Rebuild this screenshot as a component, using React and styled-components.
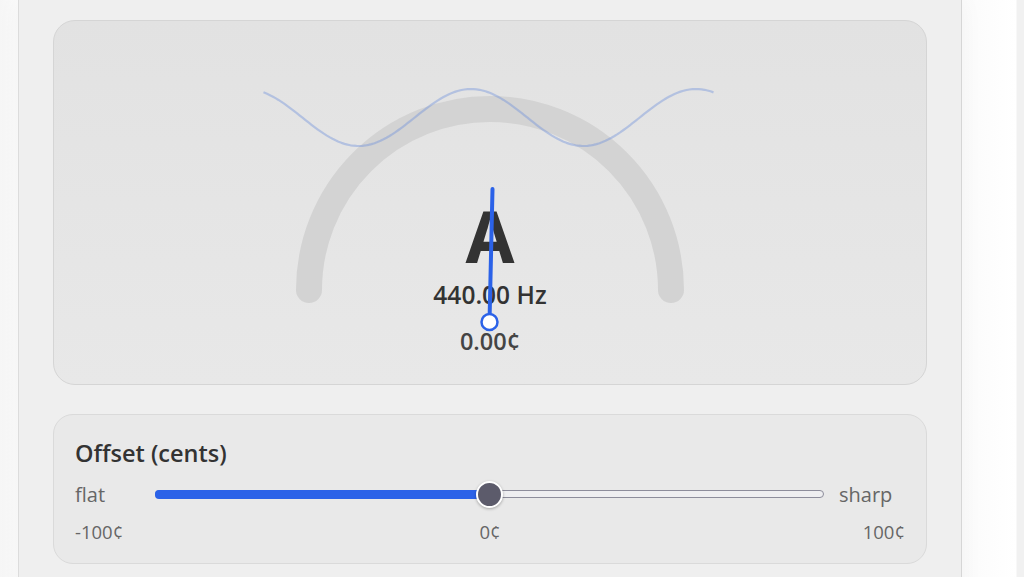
import React from "react";
import styled, { createGlobalStyle } from "styled-components";

const GlobalStyle = createGlobalStyle`
  html, body {
    margin: 0;
    padding: 0;
    overflow: hidden;
    background: linear-gradient(to right, #f6f6f6 0, #fbfbfb 18px, #fbfbfb calc(100% - 60px), #ffffff calc(100% - 8px), #f1f1f1 calc(100% - 7px));
    font-family: "Open Sans", "Noto Sans", Arial, sans-serif;
  }
`;

const Page = styled.div`
  padding-left: 18px;
  height: 577px;
`;

const Panel = styled.main`
  width: 944px;
  min-height: 620px;
  background: #efefef;
  border-left: 1px solid #dcdcdc;
  border-right: 1px solid #d6d6d6;
  box-shadow: 0 0 24px rgba(0, 0, 0, 0.04);
  padding: 20px 34px 35px;
  box-sizing: border-box;
  display: flex;
  flex-direction: column;
  gap: 29px;
`;

const GaugeCard = styled.section`
  position: relative;
  height: 365px;
  box-sizing: border-box;
  border: 1px solid #d5d5d5;
  border-radius: 22px;
  background: linear-gradient(#e2e2e2, #e8e8e8);
  display: flex;
  flex-direction: column;
  align-items: center;
  padding-top: 180px;
`;

const Dial = styled.svg`
  position: absolute;
  left: 0;
  top: 0;
  width: 100%;
  height: 100%;
  pointer-events: none;
`;

const Note = styled.div`
  font-size: 71px;
  line-height: 70px;
  font-weight: 700;
  color: #333;
`;

const Freq = styled.div`
  margin-top: 9px;
  font-size: 24.5px;
  line-height: 30px;
  font-weight: 600;
  color: #333;
`;

const Cents = styled.div`
  margin-top: 16px;
  font-size: 23.5px;
  line-height: 30px;
  font-weight: 600;
  color: #444;
`;

const OffsetCard = styled.section`
  border: 1px solid #dadada;
  border-radius: 20px;
  background: #e9e9e9;
  padding: 22px 21px 18px;
  display: flex;
  flex-direction: column;
`;

const Title = styled.h2`
  margin: 0;
  font-size: 23.5px;
  line-height: 32px;
  font-weight: 600;
  color: #333;
`;

const SliderRow = styled.div`
  display: flex;
  align-items: center;
  height: 36px;
  margin-top: 7px;
`;

const EndLabel = styled.span`
  width: ${(p) => p.$w}px;
  font-size: 20px;
  color: #666;
  margin-left: ${(p) => (p.$right ? 15 : 0)}px;
  flex: none;
`;

const Track = styled.div`
  position: relative;
  flex: 1;
  height: 8px;
  border-radius: 4px;
  box-sizing: border-box;
  border: 1.5px solid #8d8d9b;
  background: #eeeef0;
`;

const Fill = styled.div`
  position: absolute;
  left: -1.5px;
  top: -1.5px;
  bottom: -1.5px;
  border-radius: 4px;
  background: #2b62e8;
`;

const Thumb = styled.div`
  position: absolute;
  top: 50%;
  width: 27px;
  height: 27px;
  margin-left: -13.5px;
  margin-top: -13.5px;
  border-radius: 50%;
  box-sizing: border-box;
  background: #5c5b6b;
  border: 2.5px solid #fff;
  box-shadow: 0 1px 3px rgba(0, 0, 0, 0.3);
`;

const Scale = styled.div`
  display: grid;
  grid-template-columns: 1fr auto 1fr;
  font-size: 18.5px;
  line-height: 26px;
  color: #666;
  margin-top: 7px;
`;

const ScaleMark = styled.span`
  text-align: ${(p) => p.$align};
`;

const wavePath = () => {
  const pts = [];
  for (let x = 209; x <= 661; x += 3) {
    const y = 96.5 + 28.5 * Math.sin((2 * Math.PI * (x - 247.75)) / 225);
    pts.push(`${x},${y.toFixed(2)}`);
  }
  return "M" + pts.join(" L");
};

const App = () => {
  const offset = 0;
  const pct = ((offset + 100) / 200) * 100;

  return (
    <Page>
      <GlobalStyle />
      <Panel>
        <GaugeCard>
          <Note>A</Note>
          <Freq>440.00 Hz</Freq>
          <Cents>0.00¢</Cents>
          <Dial viewBox="0 0 871 363" preserveAspectRatio="xMidYMid meet">
            <path
              d="M254.5 269 A181 181 0 0 1 616.5 269"
              fill="none"
              stroke="#d3d3d3"
              strokeWidth="26"
              strokeLinecap="round"
            />
            <path
              d={wavePath()}
              fill="none"
              stroke="#6f92dc"
              strokeOpacity="0.42"
              strokeWidth="2.2"
              strokeLinejoin="round"
            />
            <line
              x1="435"
              y1="301"
              x2="438"
              y2="168"
              stroke="#2b62e8"
              strokeWidth="4"
              strokeLinecap="round"
            />
            <circle cx="435" cy="301" r="8" fill="#fff" stroke="#2b62e8" strokeWidth="2.5" />
          </Dial>
        </GaugeCard>

        <OffsetCard>
          <Title>Offset (cents)</Title>
          <SliderRow>
            <EndLabel $w={80}>flat</EndLabel>
            <Track>
              <Fill style={{ width: `calc(${pct}% + 1.5px)` }} />
              <Thumb style={{ left: `${pct}%` }} />
            </Track>
            <EndLabel $w={66} $right>
              sharp
            </EndLabel>
          </SliderRow>
          <Scale>
            <ScaleMark $align="left">-100¢</ScaleMark>
            <ScaleMark $align="center">0¢</ScaleMark>
            <ScaleMark $align="right">100¢</ScaleMark>
          </Scale>
        </OffsetCard>
      </Panel>
    </Page>
  );
};

export default App;
